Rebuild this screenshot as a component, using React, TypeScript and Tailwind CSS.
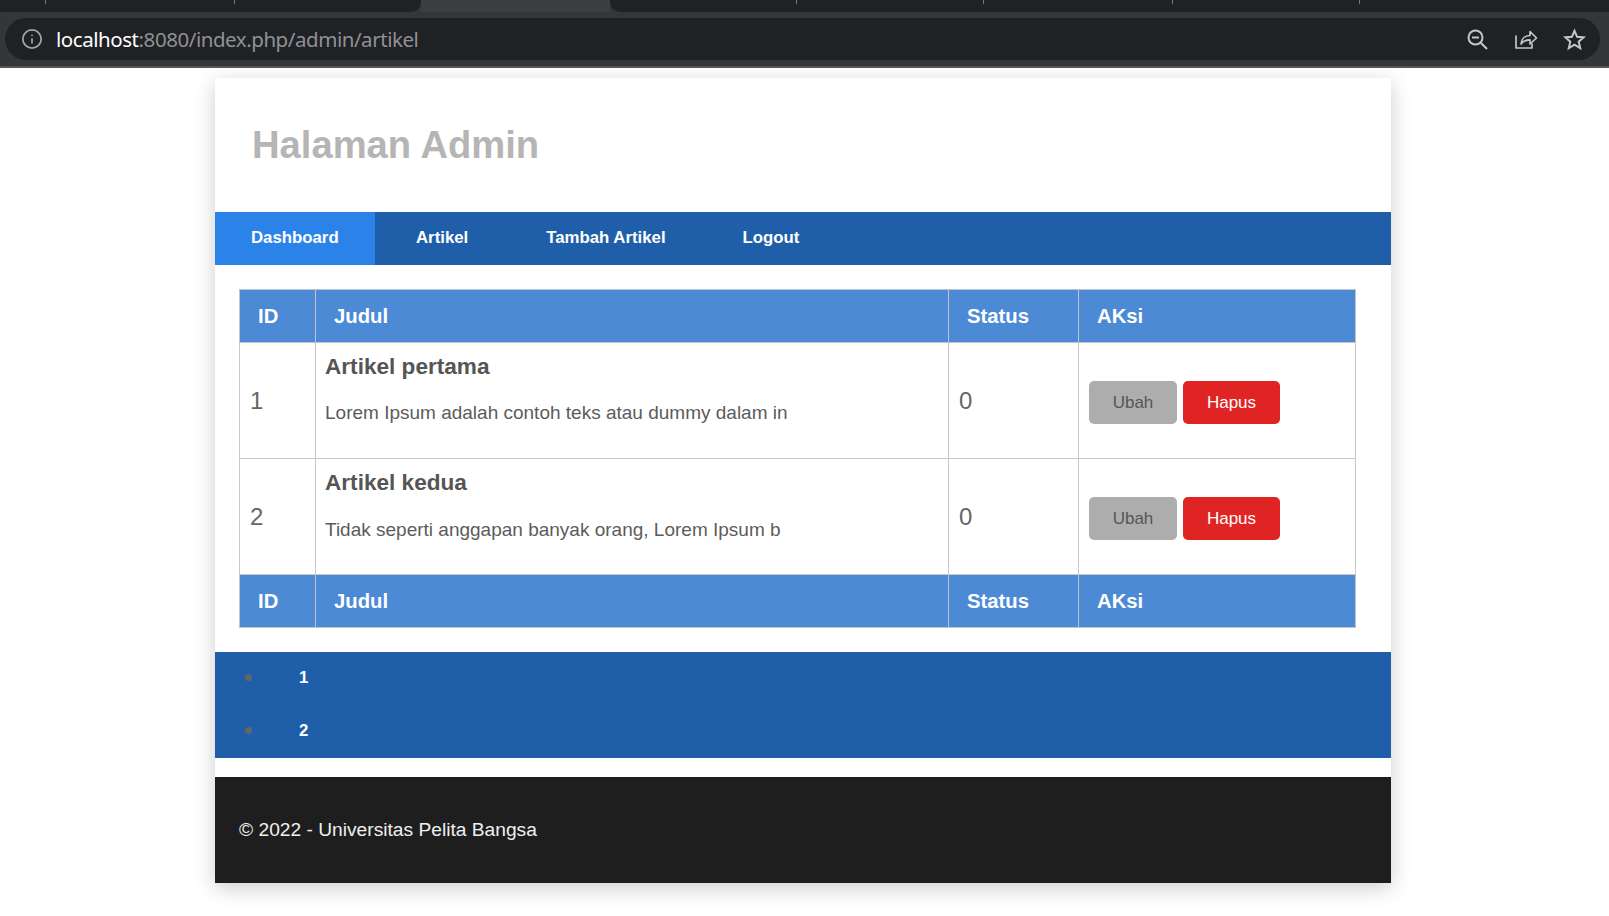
import React from "react";
import { Info } from "lucide-react";

const Head = () => (
  <tr className="h-[53px] bg-[#4c8ad5] text-left text-[20.3px] font-bold text-white">
    <th className="w-[76px] border border-[#c4c4c4] pl-[18px]">ID</th>
    <th className="w-[633px] border border-[#c4c4c4] pl-[18px]">Judul</th>
    <th className="w-[130px] border border-[#c4c4c4] pl-[18px]">Status</th>
    <th className="border border-[#c4c4c4] pl-[18px]">AKsi</th>
  </tr>
);

const Row = ({ id, title, text, h, gap }: { id: string; title: string; text: string; h: string; gap: string }) => (
  <tr className={h}>
    <td className="border border-[#c8c8c8] pl-[10px] text-[24px] text-[#666]">{id}</td>
    <td className="border border-[#c8c8c8] pr-[10px] pl-[9px] align-top">
      <h3 className="mt-[11px] text-[22.6px] leading-[26px] font-bold">{title}</h3>
      <p className={`${gap} text-[19px] leading-[26px] text-[#5c5c5c]`}>{text}</p>
    </td>
    <td className="border border-[#c8c8c8] pl-[10px] text-[24px] text-[#666]">0</td>
    <td className="border border-[#c8c8c8] pl-[10px]">
      <div className="mt-[4px] flex gap-[6px] text-[17px]">
        <a className="flex h-[43px] w-[88px] items-center justify-center rounded-[5px] bg-[#adadad] text-[#555]">Ubah</a>
        <a className="flex h-[43px] w-[97px] items-center justify-center rounded-[5px] bg-[#e02424] text-white">Hapus</a>
      </div>
    </td>
  </tr>
);

export default function App() {
  return (
    <div className="h-[916px] overflow-hidden bg-white font-['Liberation_Sans',sans-serif] text-[#555]">
      <div className="relative z-10 h-[68px] border-b-2 border-[#55565a] bg-[#35363a]">
        <div className="flex h-[12px]">
          <div className="relative w-[421px] rounded-br-[10px] bg-[#202124]">
            <span className="absolute top-0 left-[45px] h-[4px] w-px bg-[#777]" />
            <span className="absolute top-0 left-[234px] h-[4px] w-px bg-[#777]" />
          </div>
          <div className="w-[189px] bg-[#3c3d41]" />
          <div className="relative flex-1 rounded-bl-[10px] bg-[#202124]">
            <span className="absolute top-0 left-[186px] h-[4px] w-px bg-[#777]" />
            <span className="absolute top-0 left-[373px] h-[4px] w-px bg-[#777]" />
            <span className="absolute top-0 left-[562px] h-[4px] w-px bg-[#777]" />
            <span className="absolute top-0 left-[749px] h-[4px] w-px bg-[#777]" />
          </div>
        </div>
        <div className="mt-[6px] ml-[5px] flex h-[42px] w-[1595px] items-center rounded-full bg-[#202124] pr-[14px] pl-[16px]">
          <Info size={22} strokeWidth={1.9} className="text-[#a5a6a8]" />
          <div className="ml-[13px] font-['Noto_Sans',sans-serif] text-[20.5px] tracking-[-0.45px] text-[#8f9194]">
            <span className="text-white">localhost</span>:8080/index.php/admin/artikel
          </div>
          <div className="ml-auto flex items-center gap-[25px] text-[#c4c5c7]">
            <svg width="23" height="23" viewBox="0 0 23 23" fill="none" stroke="currentColor" strokeWidth="2">
              <circle cx="9.5" cy="9.5" r="7" />
              <path d="M14.7 14.7l6.3 6.3M6 9.5h7" />
            </svg>
            <svg width="24" height="24" viewBox="0 0 24 24" fill="none" stroke="currentColor" strokeWidth="1.7" strokeLinejoin="round" strokeLinecap="round">
              <path d="M2 9v12h16v-4" />
              <path d="M7 17c.5-5 4-8.5 9-8.5V4.5l6.5 6.5-6.5 6v-4.2c-4 0-7 1.5-9 4.2z" />
            </svg>
            <svg width="23" height="23" viewBox="0 0 23 23" fill="none" stroke="currentColor" strokeWidth="2" strokeLinejoin="miter">
              <path d="M11.5 2.8l2.6 6 6.5.6-4.9 4.3 1.5 6.4-5.7-3.4-5.7 3.4 1.5-6.4-4.9-4.3 6.5-.6z" />
            </svg>
          </div>
        </div>
      </div>

      <div className="mt-[10px] ml-[215px] w-[1176px] bg-white shadow-[0_5px_20px_rgba(0,0,0,0.2)]">
        <header className="flex h-[134px] items-center pl-[37px]">
          <h1 className="text-[38.2px] font-bold text-[#b5b5b5]">Halaman Admin</h1>
        </header>
        <nav className="flex h-[53px] items-center bg-[#1f5faa] pb-[2px] text-[16.8px] font-bold text-white">
          <a className="-mb-[2px] flex h-[53px] w-[160px] items-center bg-[#2b83ea] pb-[2px] pl-[36px]">Dashboard</a>
          <a className="ml-[41px]">Artikel</a>
          <a className="ml-[78px]">Tambah Artikel</a>
          <a className="ml-[77px]">Logout</a>
        </nav>
        <div className="px-[24px] py-[24px]">
          <table className="w-[1117px] table-fixed border-collapse">
            <thead>
              <Head />
            </thead>
            <tbody>
              <Row id="1" h="h-[116px]" gap="mt-[20px]" title="Artikel pertama" text="Lorem Ipsum adalah contoh teks atau dummy dalam in" />
              <Row id="2" h="h-[116px]" gap="mt-[21px]" title="Artikel kedua" text="Tidak seperti anggapan banyak orang, Lorem Ipsum b" />
            </tbody>
            <tfoot>
              <Head />
            </tfoot>
          </table>
        </div>
        <ul className="bg-[#1f5faa] text-[16.8px] font-bold text-white">
          {["1", "2"].map((n) => (
            <li key={n} className="flex h-[53px] items-center pb-[2px] pl-[30px]">
              <span className="h-[7px] w-[7px] rounded-full bg-[#666]" />
              <a className="ml-[47px]">{n}</a>
            </li>
          ))}
        </ul>
        <footer className="mt-[19px] flex h-[106px] items-center bg-[#1e1e1e] pl-[24px] text-[19.2px] text-[#f0f0f0]">
          © 2022 - Universitas Pelita Bangsa
        </footer>
      </div>
    </div>
  );
}
